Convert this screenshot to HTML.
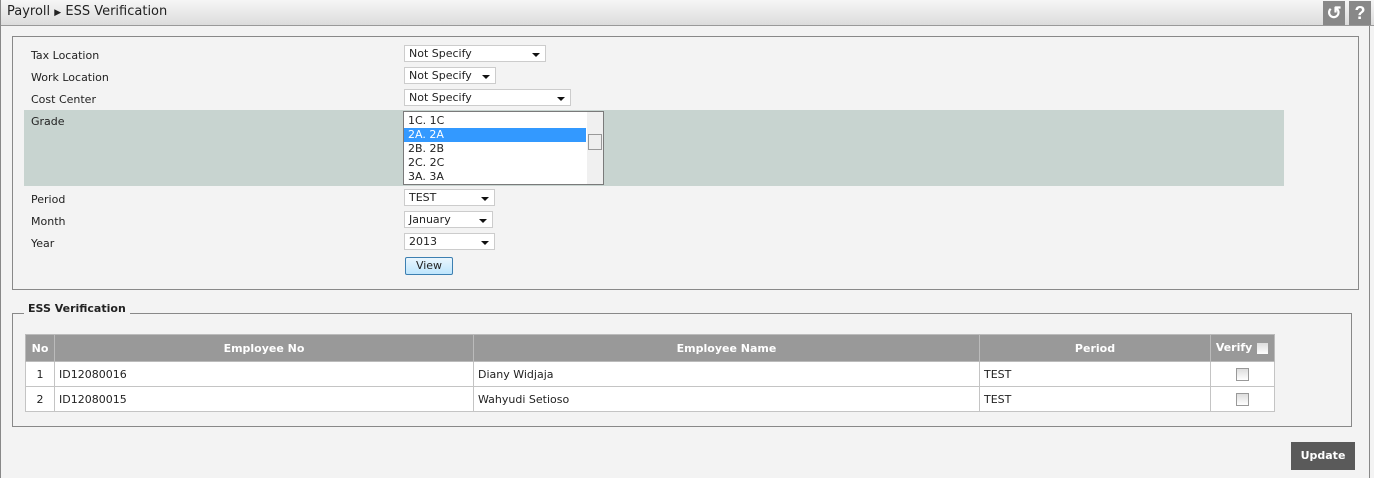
<!DOCTYPE html><html><head><style>
body{margin:0;width:1374px;height:478px;background:#f3f3f3;font-family:Tahoma,"DejaVu Sans",sans-serif;font-size:11px;color:#222;position:relative;overflow:hidden}
.a{position:absolute}
.hdr{left:0;top:0;width:1374px;height:25px;background:linear-gradient(#f6f6f6,#dcdcdc);border-bottom:1px solid #999}
.sel{position:absolute;height:17px;background:#fff;border:1px solid #ccc;box-sizing:border-box;padding:1px 4px;font-size:11px;line-height:14px}
.sel:after{content:"";position:absolute;right:5px;top:7px;border:4px solid transparent;border-top:4px solid #111;border-bottom:0}
.lbl{position:absolute;left:31px;font-size:11px}
table{border-collapse:collapse;position:absolute;left:25px;top:334px;width:1250px;font-size:11px}
th{background:#999;color:#fff;height:26px;border:1px solid #bbb;font-weight:bold;padding:0}
td{background:#fff;height:24px;border:1px solid #c4c4c4;padding:0 4px}
.cb{display:inline-block;width:11px;height:11px;border:1px solid #999;background:linear-gradient(#ddd,#fff);vertical-align:middle}
</style></head><body>
<div class="a hdr"></div>
<div class="a" style="left:0;top:0;width:1px;height:478px;background:#888"></div>
<div class="a" style="left:1369px;top:26px;width:1px;height:452px;background:#888"></div>
<div class="a" style="left:7px;top:4px;font-size:13px;color:#222">Payroll <span style="font-size:9px">&#9654;</span> ESS Verification</div>
<div class="a" style="left:1323px;top:1px;width:22px;height:24px;background:#888;color:#fff;font:bold 18px sans-serif;text-align:center;line-height:24px">&#x21BA;</div>
<div class="a" style="left:1349px;top:1px;width:22px;height:24px;background:#888;color:#fff;font:bold 18px sans-serif;text-align:center;line-height:24px">?</div>
<div class="a" style="left:12px;top:36px;width:1347px;height:254px;border:1px solid #888;box-sizing:border-box"></div>
<div class="a" style="left:24px;top:110px;width:1260px;height:76px;background:#c8d4d0"></div>
<div class="lbl" style="top:49px">Tax Location</div>
<div class="lbl" style="top:71px">Work Location</div>
<div class="lbl" style="top:93px">Cost Center</div>
<div class="lbl" style="top:115px">Grade</div>
<div class="lbl" style="top:193px">Period</div>
<div class="lbl" style="top:215px">Month</div>
<div class="lbl" style="top:237px">Year</div>
<div class="sel" style="left:404px;top:45px;width:142px">Not Specify</div>
<div class="sel" style="left:404px;top:67px;width:92px">Not Specify</div>
<div class="sel" style="left:404px;top:89px;width:167px">Not Specify</div>
<div class="a" style="left:403px;top:111px;width:201px;height:74px;border:1px solid #7a7a7a;background:#fff;box-sizing:border-box;font-size:11px;line-height:14px">
<div style="padding-left:4px;margin-top:2px">1C. 1C</div>
<div style="padding-left:4px;background:#3399ff;color:#fff;width:178px">2A. 2A</div>
<div style="padding-left:4px">2B. 2B</div>
<div style="padding-left:4px">2C. 2C</div>
<div style="padding-left:4px">3A. 3A</div>
<div class="a" style="right:0;top:0;width:16px;height:72px;background:#f0f0f0"><div style="margin:22px 1px 0;height:14px;border:1px solid #999;background:#eee"></div></div>
</div>
<div class="sel" style="left:404px;top:189px;width:91px">TEST</div>
<div class="sel" style="left:404px;top:211px;width:89px">January</div>
<div class="sel" style="left:404px;top:233px;width:91px">2013</div>
<div class="a" style="left:405px;top:257px;width:48px;height:18px;border:1px solid #3c7fb1;border-radius:2px;background:linear-gradient(#eaf6fd,#bee6fd);box-sizing:border-box;text-align:center;line-height:16px">View</div>
<div class="a" style="left:12px;top:313px;width:1340px;height:114px;border:1px solid #888;box-sizing:border-box"></div>
<div class="a" style="left:24px;top:302px;background:#f3f3f3;padding:0 4px;font-weight:bold">ESS Verification</div>
<table>
<tr><th style="width:28px">No</th><th style="width:418px">Employee No</th><th style="width:505px">Employee Name</th><th style="width:230px">Period</th><th>Verify <span class="cb"></span></th></tr>
<tr><td style="text-align:center">1</td><td>ID12080016</td><td>Diany Widjaja</td><td>TEST</td><td style="text-align:center"><span class="cb"></span></td></tr>
<tr><td style="text-align:center">2</td><td>ID12080015</td><td>Wahyudi Setioso</td><td>TEST</td><td style="text-align:center"><span class="cb"></span></td></tr>
</table>
<div class="a" style="left:1291px;top:442px;width:64px;height:28px;background:#5a5a5a;color:#fff;font-weight:bold;text-align:center;line-height:28px">Update</div>
</body></html>
